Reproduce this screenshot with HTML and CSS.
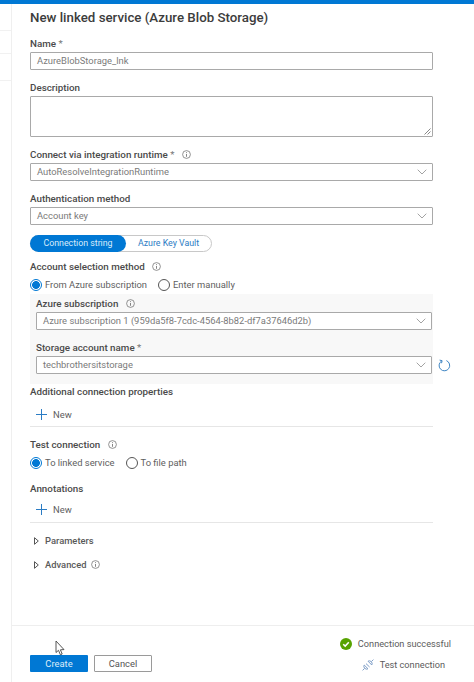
FILE: index.html
```html
<!DOCTYPE html>
<html lang="en">
<head>
    <meta charset="UTF-8">
    <meta name="viewport" content="width=device-width, initial-scale=1.0">
    <title>New linked service</title>
    <link rel="stylesheet" href="styles.css">
</head>
<body>
    <div class="top-bar"></div>
    <div class="layout">
        <div class="rail">
            <div class="rail-row rail-row-first"></div>
            <div class="rail-row rail-row-second"></div>
            <div class="rail-row rail-row-third"></div>
        </div>
        <div class="panel">
            <div class="form">
                <h1 class="title">New linked service (Azure Blob Storage)</h1>

                <div class="label label-name">Name <span class="req">*</span></div>
                <div class="field field-name">AzureBlobStorage_lnk</div>

                <div class="label label-next">Description</div>
                <div class="textarea">
                    <svg class="grip" width="7" height="7" viewBox="0 0 7 7"><path d="M0.5 6.5 L6.5 0.5 M3.5 6.5 L6.5 3.5" stroke="#888" fill="none"/></svg>
                </div>

                <div class="label label-next">Connect via integration runtime <span class="req">*</span> <svg class="info info-wide" width="9" height="9" viewBox="0 0 9 9"><use href="#info"/></svg></div>
                <div class="field select"><span>AutoResolveIntegrationRuntime</span><svg class="chevron" width="10" height="6" viewBox="0 0 10 6"><use href="#chevron"/></svg></div>

                <div class="label label-next">Authentication method</div>
                <div class="field select"><span>Account key</span><svg class="chevron" width="10" height="6" viewBox="0 0 10 6"><use href="#chevron"/></svg></div>

                <div class="toggle">
                    <div class="toggle-item toggle-on">Connection string</div>
                    <div class="toggle-item">Azure Key Vault</div>
                </div>

                <div class="label label-account">Account selection method <svg class="info info-wide" width="9" height="9" viewBox="0 0 9 9"><use href="#info"/></svg></div>
                <div class="radios">
                    <div class="radio radio-on">From Azure subscription</div>
                    <div class="radio">Enter manually</div>
                </div>

                <div class="subpanel">
                    <div class="label">Azure subscription <svg class="info info-wide" width="9" height="9" viewBox="0 0 9 9"><use href="#info"/></svg></div>
                    <div class="field select"><span>Azure subscription 1 (959da5f8-7cdc-4564-8b82-df7a37646d2b)</span><svg class="chevron" width="10" height="6" viewBox="0 0 10 6"><use href="#chevron"/></svg></div>
                    <div class="label label-next">Storage account name <span class="req">*</span></div>
                    <div class="field select"><span>techbrothersitstorage</span><svg class="chevron" width="10" height="6" viewBox="0 0 10 6"><use href="#chevron"/></svg></div>
                    <svg class="refresh" width="13" height="13" viewBox="0 0 13 13"><path d="M3.6 2 A5.3 5.3 0 1 0 8.4 1.6" fill="none" stroke="#3f86c4" stroke-width="1"/><path d="M1.6 1.1 L4.1 1.7 L3.5 4.2" fill="none" stroke="#3f86c4" stroke-width="1"/></svg>
                </div>

                <div class="label label-additional">Additional connection properties</div>
                <div class="add-row">
                    <svg width="11" height="11" viewBox="0 0 11 11"><path d="M5.5 0 V11 M0 5.5 H11" stroke="#2b7cc4" stroke-width="1"/></svg>
                    <span>New</span>
                </div>

                <div class="label label-test">Test connection <svg class="info info-wide" width="9" height="9" viewBox="0 0 9 9"><use href="#info"/></svg></div>
                <div class="radios">
                    <div class="radio radio-on">To linked service</div>
                    <div class="radio">To file path</div>
                </div>

                <div class="label label-annotations">Annotations</div>
                <div class="add-row add-row-short">
                    <svg width="11" height="11" viewBox="0 0 11 11"><path d="M5.5 0 V11 M0 5.5 H11" stroke="#2b7cc4" stroke-width="1"/></svg>
                    <span>New</span>
                </div>

                <div class="expander"><svg width="5" height="8" viewBox="0 0 5 8"><path d="M0.5 0.7 L4.3 4 L0.5 7.3 Z" fill="none" stroke="#555"/></svg>Parameters</div>
                <div class="expander"><svg width="5" height="8" viewBox="0 0 5 8"><path d="M0.5 0.7 L4.3 4 L0.5 7.3 Z" fill="none" stroke="#555"/></svg>Advanced <svg class="info" width="9" height="9" viewBox="0 0 9 9"><use href="#info"/></svg></div>
            </div>

            <div class="footer">
                <div class="buttons">
                    <button class="btn btn-primary">Create</button>
                    <button class="btn">Cancel</button>
                </div>
                <div class="status">
                    <div class="status-row">
                        <svg width="12" height="12" viewBox="0 0 12 12"><circle cx="6" cy="6" r="6" fill="#57a300"/><path d="M3.2 6.2 L5.2 8.1 L8.8 4.2" fill="none" stroke="#fff" stroke-width="1.5"/></svg>
                        Connection successful
                    </div>
                    <div class="status-row status-test">
                        <svg width="12" height="12" viewBox="0 0 12 12"><path d="M0.6 11.4 L2.6 9.4 M9.4 2.6 L11.4 0.6 M2.2 6 L6 9.8 A2.8 2.8 0 0 1 2.2 6 Z M6 2.2 L9.8 6 A2.8 2.8 0 0 0 6 2.2 Z M4 4.6 L7.6 8" fill="none" stroke="#7f9fc8" stroke-width="1"/></svg>
                        Test connection
                    </div>
                </div>
            </div>
        </div>
    </div>

    <!-- mouse pointer caught in the capture -->
    <svg class="cursor" width="10" height="16" viewBox="0 0 10 16"><path d="M1 1 V12.5 L3.5 10.3 L5.4 14.8 L7.2 14 L5.4 9.8 L9 9.6 Z" fill="#fff" stroke="#444" stroke-width="0.9"/></svg>

    <svg width="0" height="0" class="defs">
        <symbol id="info" viewBox="0 0 9 9"><circle cx="4.5" cy="4.5" r="3.9" fill="none" stroke="#666" stroke-width="0.7"/><path d="M4.5 4 V6.8 M4.5 2.2 V3.1" stroke="#666" stroke-width="0.8"/></symbol>
        <symbol id="chevron" viewBox="0 0 10 6"><path d="M0.7 0.7 L5 5 L9.3 0.7" fill="none" stroke="#999" stroke-width="0.9"/></symbol>
    </svg>
</body>
</html>
```

FILE: styles.css
```css
:root {
    --primary-color: #0078d4;
    --text-color: #4a4a4a;
    --muted-color: #7a7a7a;
    --border-color: #a9a9a9;
}

html, body {
    height: 100%;
}

body {
    margin: 0;
    display: flex;
    flex-direction: column;
    overflow: hidden;
    background: white;
    font-family: Roboto, "Open Sans", sans-serif;
    font-size: 9.4px;
    color: var(--text-color);
}

.top-bar {
    height: 4px;
    background-color: var(--primary-color);
}

.layout {
    flex: 1;
    display: flex;
    min-height: 0;
}

.rail {
    width: 11px;
    flex: none;
    border-right: 1px solid #efefef;
}

.rail-row {
    border-bottom: 1px solid #f1f1f1;
}

.rail-row-first { height: 26px; }
.rail-row-second { height: 22px; }
.rail-row-third { height: 26px; }

.panel {
    flex: 1;
    display: flex;
    flex-direction: column;
    min-width: 0;
}

.form {
    flex: 1;
    padding: 0 41px 0 18px;
}

.title {
    margin: 5px 0 0;
    font-size: 13.3px;
    line-height: 17px;
    font-weight: 500;
    color: #3c3c3c;
}

.label {
    line-height: 13px;
    font-size: 9.8px;
    font-weight: 500;
    color: var(--text-color);
}

.req {
    font-weight: 400;
    color: #777;
}

.label-name { margin-top: 11px; margin-bottom: 2px; }
.label-next { margin-top: 11px; margin-bottom: 2px; }
.label-account { margin-top: 8px; }
.label-additional { margin-top: 1px; }
.label-test { margin-top: 11px; }
.label-annotations { margin-top: 11px; }

.info {
    margin-left: 1px;
    vertical-align: -1px;
}

.info-wide {
    margin-left: 5px;
}

.field {
    height: 18px;
    box-sizing: border-box;
    border: 1px solid var(--border-color);
    border-radius: 1px;
    padding: 0 6px;
    line-height: 16px;
    color: var(--muted-color);
    background: white;
}

.select {
    display: flex;
    align-items: center;
    justify-content: space-between;
    padding-right: 5px;
}

.textarea {
    height: 41px;
    box-sizing: border-box;
    border: 1px solid var(--border-color);
    border-radius: 1px;
    display: flex;
    align-items: flex-end;
    justify-content: flex-end;
}

.grip {
    margin: 0 1px 1px 0;
}

.toggle {
    display: flex;
    width: 182px;
    height: 17px;
    box-sizing: border-box;
    margin-top: 10px;
    border: 1px solid #c8c8c8;
    border-radius: 9px;
    font-size: 8.8px;
    color: #2b7cc4;
}

.toggle-item {
    flex: 1;
    text-align: center;
    line-height: 15px;
}

.toggle-on {
    flex: none;
    width: 96px;
    margin: -1px 0 -1px -1px;
    line-height: 17px;
    border-radius: 9px;
    background-color: var(--primary-color);
    color: #d8ecfb;
}

.radios {
    display: flex;
    gap: 11px;
    height: 17px;
    margin-top: 3px;
    align-items: center;
    color: #606060;
}

.radio {
    display: flex;
    align-items: center;
    gap: 3px;
}

.radio::before {
    content: "";
    width: 12px;
    height: 12px;
    box-sizing: border-box;
    border: 1px solid #555;
    border-radius: 50%;
    background: white;
}

.radio-on::before {
    border-color: var(--primary-color);
    background: radial-gradient(circle, var(--primary-color) 3.6px, white 4.2px);
}

.subpanel {
    position: relative;
    margin-top: 1px;
    padding: 3px 1px 10px 6px;
    background-color: #f8f8f8;
}

.subpanel .label:first-child {
    margin-bottom: 2px;
}

.refresh {
    position: absolute;
    right: -18px;
    bottom: 12px;
}

.add-row {
    display: flex;
    align-items: center;
    gap: 6px;
    height: 27px;
    padding: 2px 0 0 6px;
    box-sizing: border-box;
    margin-top: 2px;
    border-bottom: 1px solid #e6e6e6;
    color: #606060;
}

.add-row-short {
    margin-top: 1px;
    padding-top: 1px;
}

.expander {
    display: flex;
    align-items: center;
    height: 13px;
    margin-top: 11px;
    padding-left: 4px;
    gap: 6px;
    color: #5a5a5a;
    font-weight: 500;
}

.expander .info {
    margin-left: -2px;
}

.footer {
    height: 56px;
    flex: none;
    display: flex;
    justify-content: space-between;
    border-top: 1px solid #eeeeee;
    padding: 0 23px 0 18px;
}

.buttons {
    display: flex;
    gap: 6px;
    margin-top: 29px;
}

.btn {
    width: 58px;
    height: 17px;
    padding: 0;
    border: 1px solid #9a9a9a;
    border-radius: 1px;
    background: white;
    font-family: inherit;
    font-size: 9.4px;
    color: #555;
}

.btn-primary {
    border: none;
    background-color: var(--primary-color);
    color: #dcecf8;
}

.status {
    padding-top: 11px;
    display: flex;
    flex-direction: column;
    align-items: flex-end;
    gap: 8px;
    font-size: 9.2px;
    color: #5c5c5c;
}

.status-row {
    display: flex;
    align-items: center;
    gap: 6px;
    height: 13px;
}

.status-test {
    margin-right: 6px;
}

.cursor {
    position: absolute;
    left: 55px;
    top: 640px;
}

.defs {
    position: absolute;
}
```
